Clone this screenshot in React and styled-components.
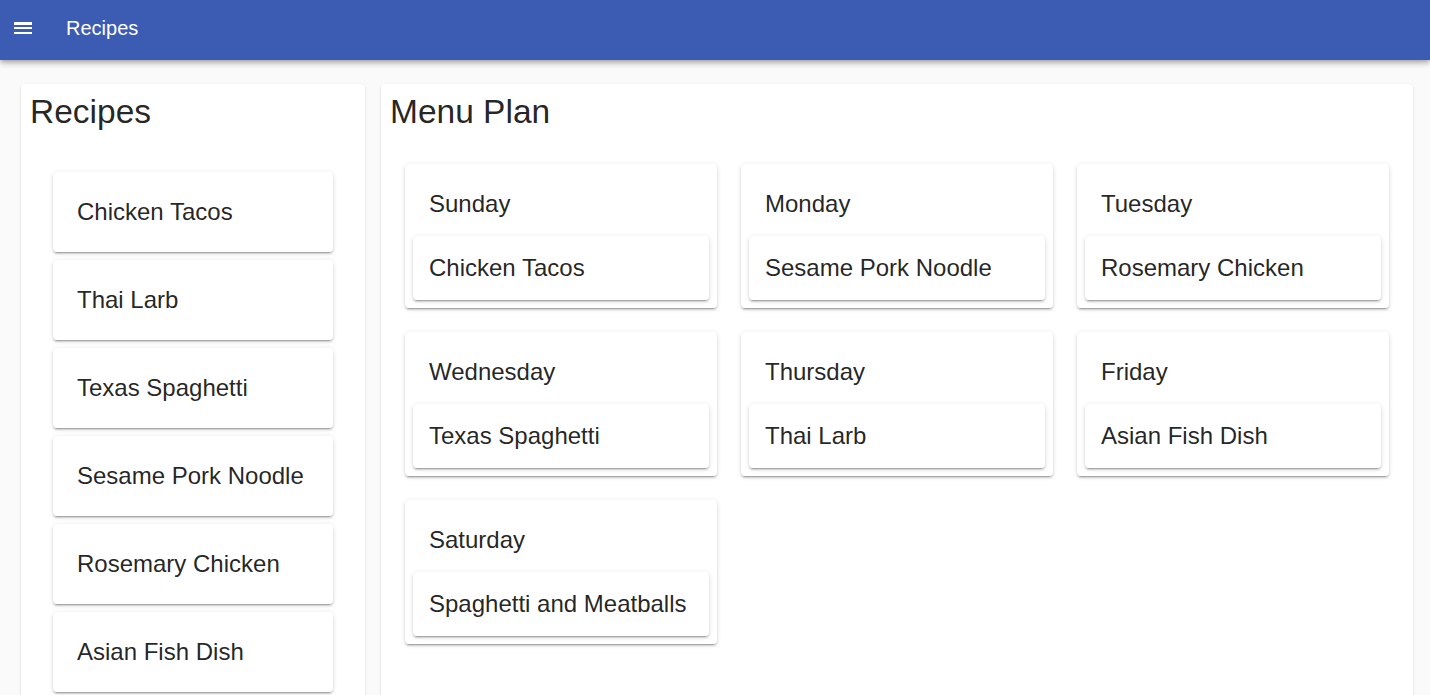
import React from 'react';
import styled, { createGlobalStyle } from 'styled-components';

const GlobalStyle = createGlobalStyle`
  html, body {
    margin: 0;
    padding: 0;
    background-color: #fafafa;
    font-family: "Liberation Sans", Arial, Helvetica, sans-serif;
    color: rgba(0, 0, 0, 0.87);
  }
`;

const elevation1 = '0px 2px 1px -1px rgba(0,0,0,0.2), 0px 1px 1px 0px rgba(0,0,0,0.14), 0px 1px 3px 0px rgba(0,0,0,0.12)';
const elevation2 = '0px 3px 1px -2px rgba(0,0,0,0.2), 0px 2px 2px 0px rgba(0,0,0,0.14), 0px 1px 5px 0px rgba(0,0,0,0.12)';

const AppBar = styled.header`
  height: 60px;
  box-sizing: border-box;
  padding: 0 0 5px 11px;
  display: flex;
  align-items: center;
  background-color: #3c5bb3;
  color: #fff;
  box-shadow: 0px 2px 4px -1px rgba(0,0,0,0.2), 0px 4px 5px 0px rgba(0,0,0,0.14), 0px 1px 10px 0px rgba(0,0,0,0.12);
  position: relative;
  z-index: 2;
`;

const MenuButton = styled.span`
  display: flex;
  width: 24px;
  height: 24px;
  margin-right: 31px;
`;

const BarTitle = styled.h1`
  margin: 0;
  font-size: 20px;
  font-weight: 400;
  line-height: 1;
`;

const Content = styled.main`
  display: grid;
  grid-template-columns: 344px 1fr;
  gap: 16px;
  padding: 24px 17px 0 21px;
  align-items: stretch;
`;

const Panel = styled.section`
  background: #fff;
  border-radius: 4px;
  box-shadow: ${elevation1};
  padding: 7px 8px 8px;
`;

const Heading = styled.h2`
  margin: 0;
  font-size: 33.5px;
  font-weight: 400;
  line-height: 42px;
  padding-left: 1px;
`;

const RecipeList = styled.div`
  display: flex;
  flex-direction: column;
  gap: 8px;
  padding: 39px 24px 24px;
`;

const RecipeCard = styled.div`
  height: 80px;
  display: flex;
  align-items: center;
  padding: 0 24px;
  background: #fff;
  border-radius: 4px;
  box-shadow: ${elevation2};
  font-size: 24px;
`;

const DayGrid = styled.div`
  display: grid;
  grid-template-columns: repeat(3, 1fr);
  gap: 24px;
  padding: 31px 16px 34px;
`;

const DayCard = styled.div`
  background: #fff;
  border-radius: 4px;
  box-shadow: ${elevation2};
  padding: 8px;
`;

const DayName = styled.div`
  height: 64px;
  display: flex;
  align-items: center;
  padding: 0 16px;
  font-size: 24px;
`;

const DayRecipe = styled.div`
  height: 64px;
  display: flex;
  align-items: center;
  padding: 0 16px;
  background: #fff;
  border-radius: 4px;
  box-shadow: ${elevation2};
  font-size: 24px;
`;

const MenuIcon = () => (
  <svg width="24" height="24" viewBox="0 0 24 24" fill="#fff">
    <path d="M3 18h18v-2H3v2zm0-5h18v-2H3v2zm0-6v2h18V6H3z" />
  </svg>
);

const recipes = [
  'Chicken Tacos',
  'Thai Larb',
  'Texas Spaghetti',
  'Sesame Pork Noodle',
  'Rosemary Chicken',
  'Asian Fish Dish',
];

const plan = [
  { day: 'Sunday', recipe: 'Chicken Tacos' },
  { day: 'Monday', recipe: 'Sesame Pork Noodle' },
  { day: 'Tuesday', recipe: 'Rosemary Chicken' },
  { day: 'Wednesday', recipe: 'Texas Spaghetti' },
  { day: 'Thursday', recipe: 'Thai Larb' },
  { day: 'Friday', recipe: 'Asian Fish Dish' },
  { day: 'Saturday', recipe: 'Spaghetti and Meatballs' },
];

const App = () => (
  <>
    <GlobalStyle />
    <AppBar>
      <MenuButton>
        <MenuIcon />
      </MenuButton>
      <BarTitle>Recipes</BarTitle>
    </AppBar>
    <Content>
      <Panel>
        <Heading>Recipes</Heading>
        <RecipeList>
          {recipes.map((r) => (
            <RecipeCard key={r}>{r}</RecipeCard>
          ))}
        </RecipeList>
      </Panel>
      <Panel>
        <Heading>Menu Plan</Heading>
        <DayGrid>
          {plan.map(({ day, recipe }) => (
            <DayCard key={day}>
              <DayName>{day}</DayName>
              <DayRecipe>{recipe}</DayRecipe>
            </DayCard>
          ))}
        </DayGrid>
      </Panel>
    </Content>
  </>
);

export default App;
